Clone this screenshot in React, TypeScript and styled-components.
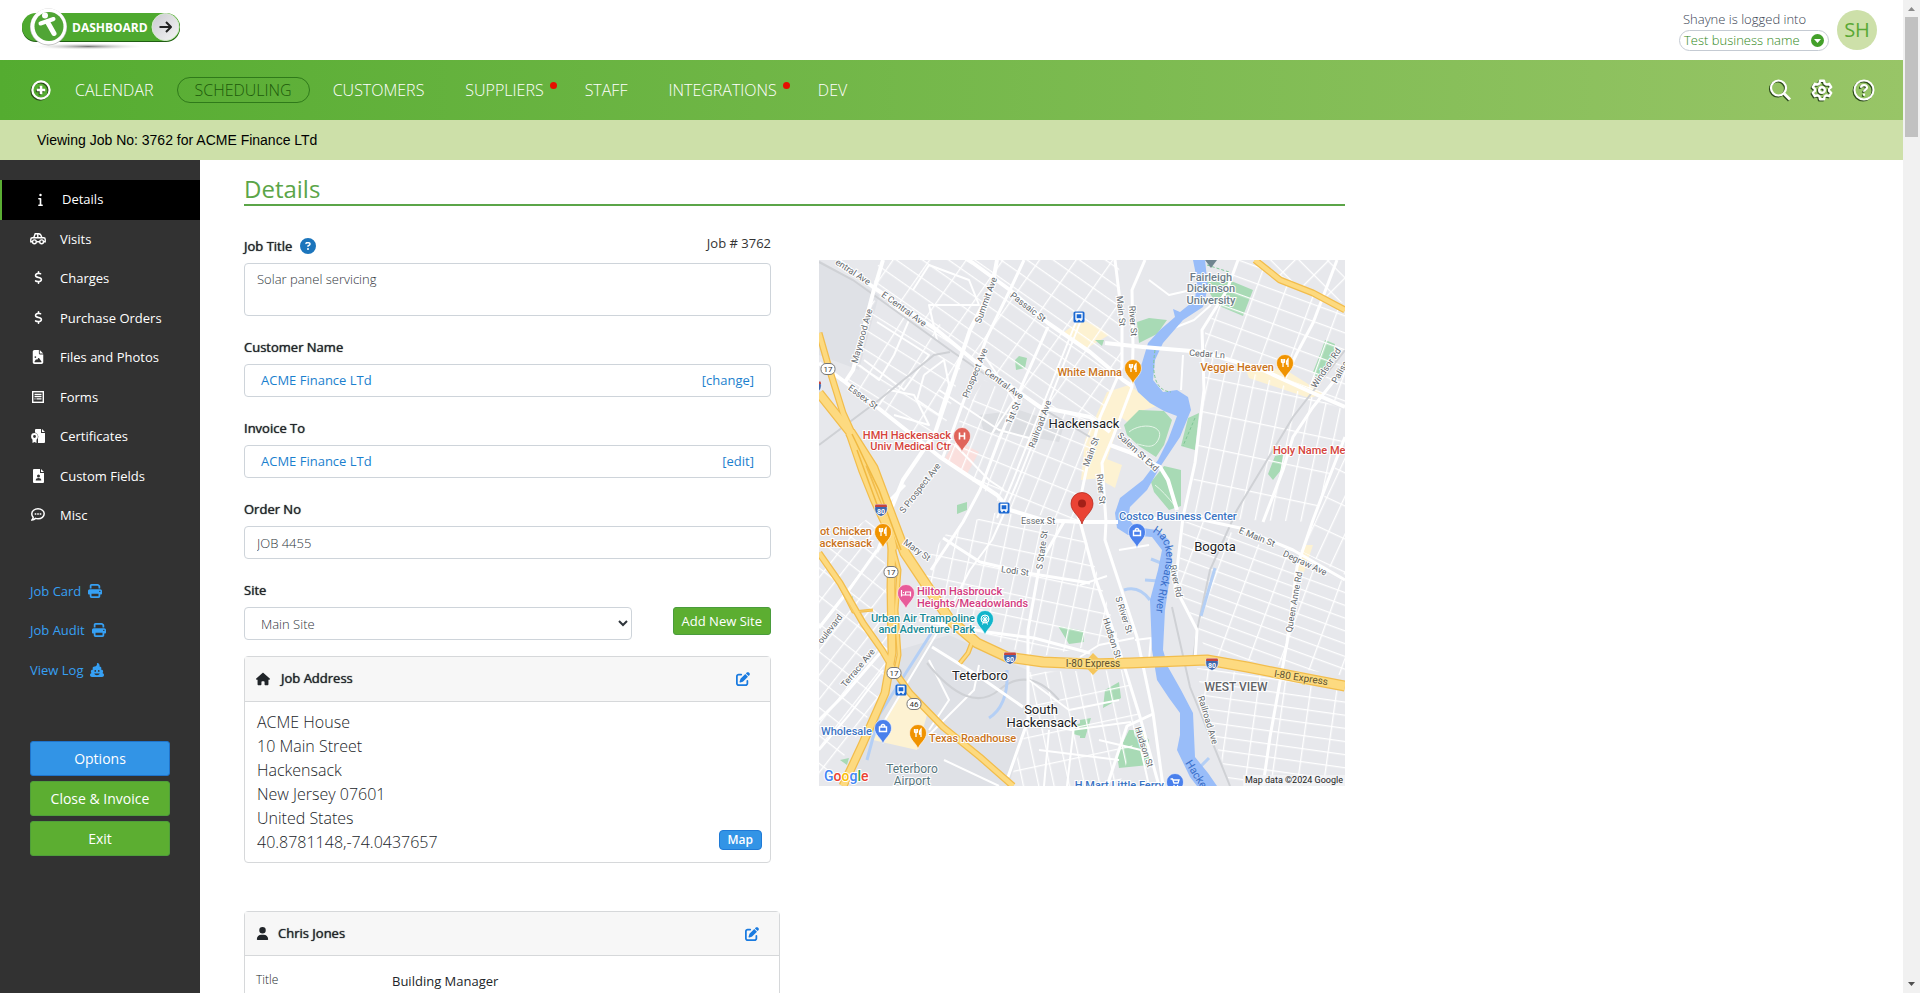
import React from "react";
import styled, { createGlobalStyle, css } from "styled-components";
import {
  FaInfo,
  FaDollarSign,
  FaFileImage,
  FaPrint,
  FaPoo,
  FaHouse,
  FaUser,
  FaPenToSquare,
  FaCircleQuestion,
} from "react-icons/fa6";

const green = "#5aad33";
const blue = "#1b7fce";

const GlobalStyle = createGlobalStyle`
  * { box-sizing: border-box; }
  body {
    margin: 0;
    background: #fff;
    color: #212529;
    font-family: "Open Sans", "Noto Sans", sans-serif;
    font-size: 13px;
    line-height: 20px;
  }
  button, input, select, textarea { font: inherit; color: inherit; margin: 0; }
  a { text-decoration: none; }
  h1, h2, ul, dl, dd, dt, p, address { margin: 0; padding: 0; font-style: normal; }
  ul { list-style: none; }
`;

const Shell = styled.div`
  display: flex;
  height: 100vh;
  overflow: hidden;
`;

const Page = styled.div`
  flex: 1;
  min-width: 0;
  display: flex;
  flex-direction: column;
`;

const ScrollTrack = styled.div`
  width: 17px;
  flex: none;
  background: #f1f1f1;
  display: flex;
  flex-direction: column;
  align-items: center;
  justify-content: space-between;
`;

const ScrollUpper = styled.div`
  display: flex;
  flex-direction: column;
`;

const ScrollThumb = styled.div`
  width: 13px;
  height: 120px;
  background: #c1c1c1;
`;

const ScrollArrow = styled.svg`
  display: block;
  width: 13px;
  height: 17px;
`;

const TopBar = styled.header`
  display: flex;
  align-items: center;
  justify-content: space-between;
  height: 60px;
  flex: none;
  padding: 0 26px 0 20px;
`;

const LogoLink = styled.a`
  display: block;
  height: 44px;
`;

const Account = styled.div`
  display: flex;
  align-items: center;
  gap: 8px;
`;

const AccountInfo = styled.div`
  display: flex;
  flex-direction: column;
`;

const AccountText = styled.span`
  padding: 0 0 1px 4px;
  font-weight: 300;
  color: #374151;
`;

const BusinessButton = styled.button`
  display: flex;
  align-items: center;
  justify-content: space-between;
  width: 150px;
  height: 21px;
  padding: 0 4px;
  border: 1px solid #c5cbd3;
  border-radius: 11px;
  background: #fff;
  color: #2f8716;
  font-weight: 300;
  line-height: 19px;
`;

const Avatar = styled.button`
  width: 40px;
  height: 40px;
  padding: 0;
  border: 0;
  border-radius: 50%;
  background: #cde0a9;
  color: #59a835;
  font-size: 20px;
`;

const MainNav = styled.nav`
  display: flex;
  align-items: center;
  height: 60px;
  flex: none;
  padding: 0 28px 0 31px;
  background: linear-gradient(90deg, #54ac30 0%, #98c567 100%);
`;

const NavList = styled.ul`
  display: flex;
  gap: 5px;
  flex: 1;
  padding-left: 6px;
`;

const NavLink = styled.a<{ $active?: boolean }>`
  position: relative;
  display: block;
  height: 26px;
  padding: 0 17px;
  border: 1px solid transparent;
  border-radius: 13px;
  color: #fff;
  font-size: 16px;
  font-weight: 300;
  line-height: 24px;
  ${(p) =>
    p.$active &&
    css`
      border-color: #2f7a1a;
      color: #1d590b;
    `}
`;

const NavDot = styled.span`
  position: absolute;
  top: 4px;
  right: 4px;
  width: 7px;
  height: 7px;
  border-radius: 50%;
  background: #e60f00;
`;

const NavActions = styled.div`
  display: flex;
  gap: 20px;
`;

const IconButton = styled.button`
  display: flex;
  padding: 0;
  border: 0;
  background: none;
  svg {
    filter: drop-shadow(-1px 1px 0 #2b4a1b);
  }
`;

const JobBar = styled.div`
  display: flex;
  align-items: center;
  height: 40px;
  flex: none;
  padding: 0 37px;
  background: #cde0a9;
  color: #000;
  font-family: "Liberation Sans", Arial, sans-serif;
  font-size: 14px;
`;

const Body = styled.div`
  flex: 1;
  min-height: 0;
  display: flex;
`;

const Sidebar = styled.aside`
  width: 200px;
  flex: none;
  padding-top: 20px;
  background: #323232;
`;

const SideItem = styled.li`
  &:nth-child(2n + 3) {
    padding-bottom: 1px;
  }
`;

const SideLink = styled.a<{ $active?: boolean }>`
  display: flex;
  align-items: center;
  gap: 14px;
  height: 39px;
  padding: 0 0 2px 30px;
  color: #fff;
  ${(p) =>
    p.$active &&
    css`
      height: 40px;
      border-left: 2px solid ${green};
      background: #000;
    `}
`;

const SideIcon = styled.span`
  display: flex;
  justify-content: center;
  width: 16px;
`;

const ReportList = styled.ul`
  padding: 36px 0 0 30px;
`;

const ReportItem = styled.li`
  &:nth-child(even) {
    padding-bottom: 1px;
  }
`;

const ReportLink = styled.a`
  display: flex;
  align-items: center;
  gap: 7px;
  height: 39px;
  padding-bottom: 2px;
  color: #36a0f4;
`;

const SideButtons = styled.div`
  display: flex;
  flex-direction: column;
  gap: 5px;
  padding: 51px 30px 0;
`;

const SideButton = styled.button<{ $blue?: boolean }>`
  height: 35px;
  border: 1px solid ${(p) => (p.$blue ? "#1f74cc" : "#4f9f3a")};
  border-radius: 3px;
  background: ${(p) => (p.$blue ? "#3294e6" : "#5cae31")};
  color: #fff;
  font-size: 14px;
`;

const Main = styled.main`
  flex: 1;
  min-width: 0;
  padding: 14px 44px 0;
`;

const Content = styled.div`
  max-width: 1101px;
`;

const Heading = styled.h1`
  border-bottom: 2px solid #5ba548;
  color: #5ba548;
  font-size: 24px;
  font-weight: 400;
  line-height: 30px;
`;

const Columns = styled.div`
  display: grid;
  grid-template-columns: minmax(0, 527fr) minmax(0, 526fr);
  gap: 48px;
  align-items: start;
`;

const Form = styled.form`
  padding-top: 30px;
`;

const Field = styled.div`
  display: flex;
  flex-direction: column;
  gap: 7px;
  margin-bottom: 21px;
`;

const LabelRow = styled.div`
  display: flex;
  align-items: center;
  gap: 8px;
  height: 20px;
`;

const strongText = css`
  font-weight: 500;
  text-shadow: 0 0 1px #212529;
`;

const Label = styled.label`
  ${strongText}
`;

const HelpButton = styled.button`
  display: flex;
  padding: 0;
  border: 0;
  background: none;
  color: #1c75bc;
`;

const JobNumber = styled.span`
  margin-left: auto;
  padding-bottom: 6px;
  font-weight: 400;
  color: #333;
`;

const controlFrame = css`
  width: 100%;
  border: 1px solid #ced4da;
  border-radius: 4px;
  background: #fff;
  color: #2f353b;
`;

const JobTitleArea = styled.textarea`
  ${controlFrame}
  display: block;
  height: 53px;
  padding: 5px 12px;
  font-weight: 300;
  resize: none;
`;

const TextInput = styled.input`
  ${controlFrame}
  height: 33px;
  padding: 0 12px;
  font-weight: 300;
`;

const LinkBox = styled.div`
  ${controlFrame}
  display: flex;
  align-items: center;
  justify-content: space-between;
  height: 33px;
  padding: 0 16px 2px 16px;
`;

const TextLink = styled.a`
  color: ${blue};
`;

const SiteRow = styled.div`
  display: flex;
  align-items: flex-start;
  gap: 41px;
`;

const SiteSelect = styled.select`
  ${controlFrame}
  flex: 1;
  height: 33px;
  padding: 0 0 0 12px;
  font-weight: 300;
`;

const AddButton = styled.button`
  height: 28px;
  padding: 0 8px;
  border: 1px solid #4a9c3c;
  border-radius: 3px;
  background: #5cae31;
  color: #fff;
`;

const Panel = styled.section<{ $wide?: boolean }>`
  margin-top: ${(p) => (p.$wide ? "48px" : "-5px")};
  margin-right: ${(p) => (p.$wide ? "-9px" : "0")};
  border: 1px solid #d6d8da;
  border-radius: 4px;
  background: #fff;
`;

const PanelHeader = styled.header<{ $compact?: boolean }>`
  display: flex;
  align-items: center;
  gap: ${(p) => (p.$compact ? "9px" : "11px")};
  height: ${(p) => (p.$compact ? "44px" : "45px")};
  padding: 0 20px 0 11px;
  border-bottom: 1px solid #d6d8da;
  background: #f7f7f7;
  color: #212529;
`;

const PanelTitle = styled.h2`
  ${strongText}
  flex: 1;
  padding-bottom: 2px;
  font-size: 13px;
`;

const EditLink = styled.a`
  display: flex;
  color: #1a7be0;
`;

const AddressBody = styled.div`
  display: flex;
  align-items: flex-end;
  justify-content: space-between;
  padding: 8px 8px 8px 12px;
`;

const Address = styled.address`
  font-size: 16px;
  font-weight: 300;
  line-height: 24px;
`;

const MapButton = styled.button`
  height: 20px;
  margin-bottom: 4px;
  padding: 0 8px;
  border: 1px solid #1f7ad6;
  border-radius: 4px;
  background: #3294e6;
  color: #fff;
  font-size: 12px;
  font-weight: 600;
  line-height: 18px;
`;

const ContactList = styled.dl`
  display: grid;
  grid-template-columns: 136px 1fr;
  min-height: 80px;
  padding: 14px 11px;
`;

const ContactTerm = styled.dt`
  font-size: 12px;
  font-weight: 300;
`;

const ContactValue = styled.dd`
  padding-top: 1px;
`;

const MapSvg = styled.svg`
  display: block;
  width: 100%;
  margin-top: 54px;
  font-family: Roboto, sans-serif;
`;

/* ---------- icons ---------- */

const DashboardLogo = () => (
  <svg width="162" height="44" viewBox="0 0 162 44" role="img" aria-label="Dashboard">
    <defs>
      <radialGradient id="logoShadow">
        <stop offset="0" stopColor="#777" />
        <stop offset="1" stopColor="#fff" stopOpacity="0" />
      </radialGradient>
      <linearGradient id="logoKnob" x1="0" y1="0" x2="1" y2="1">
        <stop offset="0" stopColor="#c9c9cf" />
        <stop offset="1" stopColor="#f6f6f6" />
      </linearGradient>
    </defs>
    <ellipse cx="68" cy="38.500" rx="60" ry="3.500" fill="url(#logoShadow)" />
    <rect x="2" y="6" width="158" height="28" rx="14" fill="#1f5e12" />
    <rect x="2" y="5" width="158" height="28" rx="14" fill="#4ea92f" />
    <ellipse cx="28.500" cy="19" rx="18.500" ry="18.500" fill="#b9b9b9" />
    <circle cx="28.500" cy="18.500" r="18" fill="#fff" />
    <circle cx="29" cy="18.500" r="14.500" fill="#50a535" />
    <circle cx="25" cy="7.500" r="3" fill="#fff" />
    <path d="M20.500 15.500 33.500 11" stroke="#fff" strokeWidth="4" strokeLinecap="round" />
    <path d="M27.500 14 34 25.500" stroke="#fff" strokeWidth="5" strokeLinecap="round" />
    <text x="52" y="24" fill="#fff" fontSize="12" fontWeight="700" fontFamily="Open Sans">
      DASHBOARD
    </text>
    <circle cx="145.500" cy="19" r="13.500" fill="url(#logoKnob)" stroke="#d9ead2" />
    <path d="M139.500 19h11M146 14l5 5-5 5" fill="none" stroke="#222" strokeWidth="2" strokeLinejoin="round" />
  </svg>
);

const PlusIcon = () => (
  <svg width="20" height="20" viewBox="0 0 20 20" fill="none" stroke="#fff" strokeWidth="2.200">
    <circle cx="10" cy="10" r="8.600" />
    <path d="M10 5.800v8.400M5.800 10h8.400" strokeWidth="2.600" />
  </svg>
);

const SearchIcon = () => (
  <svg width="22" height="22" viewBox="0 0 22 22" fill="none" stroke="#fff" strokeWidth="2.200">
    <circle cx="9.500" cy="9" r="7.500" />
    <path d="m15 14.500 6 6" strokeWidth="2.800" />
  </svg>
);

const GearIcon = () => (
  <svg width="22" height="22" viewBox="0 0 22 22" fill="none" stroke="#fff" strokeWidth="2.400" strokeLinejoin="round">
    <path d="M9 1.800h4l.6 2.700 1.900 1.100 2.700-.8 2 3.400-2.100 1.900v1.800l2.100 1.900-2 3.400-2.700-.8-1.900 1.100-.6 2.700H9l-.6-2.700-1.900-1.100-2.700.8-2-3.400 2.100-1.900v-1.800L1.800 8.200l2-3.400 2.700.8 1.900-1.100z" />
    <circle cx="11" cy="11" r="2.800" />
  </svg>
);

const HelpIcon = () => (
  <svg width="22" height="22" viewBox="0 0 22 22" fill="none" stroke="#fff" strokeWidth="2.200">
    <circle cx="11" cy="11" r="9.500" strokeWidth="2" />
    <path d="M8 8.800c0-3.600 6-3.600 6-.3 0 2.200-3 2.100-3 4.300" />
    <path d="M11 14.600v2.200" />
  </svg>
);

const ChevronBadge = () => (
  <svg width="13" height="13" viewBox="0 0 13 13">
    <circle cx="6.500" cy="6.500" r="6.500" fill="#43a02a" />
    <path d="M3 5h7L6.500 9z" fill="#fff" />
  </svg>
);

const CarIcon = () => (
  <svg width="16" height="13" viewBox="0 0 16 13" fill="none" stroke="#fff" strokeWidth="1.400">
    <path d="M2.500 9.800H.8V7.200c0-.8.600-1.500 1.500-1.500h11.400c.9 0 1.500.7 1.500 1.500v2.600h-1.700M6.500 9.800h3" />
    <path d="M3.800 5.500 5.200 1.800h3.600c1.200 0 2.500 1.800 3 3.700M7.800 2v3.500" />
    <circle cx="4.400" cy="9.800" r="1.900" />
    <circle cx="11.600" cy="9.800" r="1.900" />
  </svg>
);

const FormIcon = () => (
  <svg width="12" height="12" viewBox="0 0 12 12" fill="none" stroke="#fff" strokeWidth="1.400">
    <rect x=".7" y=".7" width="10.600" height="10.600" />
    <path d="M2.500 3.500h7M2.500 5.700h7M4.500 7.900h5M2.500 7.900h1" strokeWidth="1.300" />
  </svg>
);

const CertificateIcon = () => (
  <svg width="14" height="14" viewBox="0 0 14 14">
    <path d="M5 0h5v4h4v9a1 1 0 0 1-1 1H7V9.500a4.500 4.500 0 0 0-3-6V1a1 1 0 0 1 1-1zM11 0l3 3h-3z" fill="#fff" />
    <circle cx="3.500" cy="7.500" r="2.400" fill="none" stroke="#fff" strokeWidth="2" />
    <path d="M1.500 10h4v4l-2-1-2 1z" fill="#fff" />
  </svg>
);

const PortraitFileIcon = () => (
  <svg width="11" height="14" viewBox="0 0 11 14">
    <path d="M1 0h6v4h4v9a1 1 0 0 1-1 1H1a1 1 0 0 1-1-1V1a1 1 0 0 1 1-1zM8 0l3 3H8z" fill="#fff" />
    <circle cx="5.500" cy="7" r="1.500" fill="#323232" />
    <path d="M2.700 11.500c0-3.200 5.600-3.200 5.600 0z" fill="#323232" />
  </svg>
);

const CommentIcon = () => (
  <svg width="14" height="13" viewBox="0 0 14 13">
    <path
      d="M7 .8c3.500 0 6.200 2.200 6.200 5s-2.700 5-6.200 5c-.9 0-1.700-.1-2.400-.4-.9.800-2.200 1.500-3.700 1.600.8-.9 1.200-1.700 1.300-2.700A4.600 4.600 0 0 1 .8 5.800c0-2.800 2.700-5 6.200-5z"
      fill="none"
      stroke="#fff"
      strokeWidth="1.500"
    />
    <path d="M3.700 5.200h1.600v1.500H3.700zM6.200 5.200h1.600v1.500H6.200zM8.700 5.200h1.600v1.500H8.700z" fill="#fff" />
  </svg>
);

/* ---------- map ---------- */

const Road = ({ pts, w = 3 }: { pts: string; w?: number }) => (
  <polyline points={pts} fill="none" stroke="#fff" strokeWidth={w} strokeLinejoin="round" />
);

const highways: [string, number][] = [
  ["0,73 10,108 24,153 34,175 48,205", 6],
  ["0,133 31,172 44,210 56,240 70,270 74,290", 9],
  ["31,172 54,208 66,240 86,293 106,323 131,360 158,383 188,397 224,402 271,404 311,403 388,400 428,407 478,417 526,426", 10],
  ["66,262 73,285 72,327 73,393 66,433 44,483 24,526", 8],
  ["74,288 80,310 77,350 80,395 76,415", 4],
  ["0,293 21,323 44,363 63,390 76,412 91,433 124,467 161,497 194,526", 6],
  ["154,380 149,393 141,403", 4],
  ["21,326 34,352 54,350", 2],
  ["436,0 461,20 494,33 526,50", 6],
];

const roads: [string, number][] = [
  ["19,0 54,27 118,70 158,103 221,147 271,157 291,172", 4],
  ["64,0 54,33 34,110 26,122", 4],
  ["0,103 26,122 58,147 121,197 178,235 191,250 224,260 262,262 299,262", 4],
  ["178,0 173,27 151,70 116,173 84,220 73,247", 4],
  ["205,0 191,30 168,77 134,170 124,197", 3],
  ["130,-12 154,3 191,30 229,63 271,92 304,120 313,126", 4],
  ["229,67 204,123 181,177 161,230 144,262 112,310", 3],
  ["262,60 224,157 198,223 183,258 173,280 151,310 118,373 60,470", 2],
  ["257,62 219,157 193,223 178,258", 2],
  ["296,0 303,57 303,107 281,157 268,207 261,240 261,262", 3],
  ["326,0 313,30 314,87 313,127 294,177 283,203 287,262 286,280 318,377 334,453 344,526", 3],
  ["255,244 262,265 276,317 294,370 321,457 340,526", 3],
  ["286,83 324,87 384,92 444,110 494,133 526,147", 4],
  ["419,0 408,30 383,70 385,130 376,203 364,257 356,327 378,370 376,400", 3],
  ["518,0 494,63 478,93 466,118", 3],
  ["526,107 494,147 474,177 464,210 444,262", 3],
  ["526,177 508,223 494,260 478,307 468,383 451,477 444,526", 3],
  ["320,258 384,260 421,268 474,290 526,320", 3],
  ["291,185 310,192 341,207 349,220 358,250", 4],
  ["124,278 161,302 208,313 271,323", 3],
  ["246,260 221,303 209,370 209,460 189,517", 3],
  ["113,387 158,415 204,447", 3],
  ["100,360 168,372 215,378 271,393", 3],
  ["58,290 30,330 0,368", 3],
  ["61,393 25,435 0,460", 3],
  ["64,410 30,455 0,490", 2],
  ["74,250 58,292", 3],
  ["86,225 66,245", 3],
  ["261,325 276,320 288,316", 2],
  ["288,526 308,466 334,454", 3],
  ["261,397 280,385 315,378", 2],
  ["210,420 250,450 300,440", 2],
  ["209,460 252,470 312,462", 2],
];

const thin: string[] = [
  "70,45 90,60 75,95 60,120 40,105",
  "94,30 110,5 150,20 160,45 110,45 118,80",
  "58,62 110,95 85,130 45,100",
  "60,145 70,130 95,135 110,165 75,155",
  "105,115 125,100 130,125 120,155 98,140 105,115",
  "120,130 180,170 210,178",
  "165,95 195,140 172,175",
  "136,185 170,220 185,230",
  "330,20 350,35 372,30",
  "350,70 375,60 392,45",
  "364,95 362,130",
  "330,526 322,490 280,480",
  "110,400 130,440 110,470",
  "160,405 155,430 110,475",
  "125,500 180,526",
  "220,490 300,500",
  "230,470 225,526",
  "255,465 248,526",
  "300,290 330,285",
  "316,380 332,378 330,400",
];

const grids: { id: string; angle: number; w: number; h: number; area: string }[] = [
  { id: "gNorthWest", angle: 35, w: 30, h: 15, area: "60,0 300,0 303,110 280,160 230,150 158,103 54,27" },
  { id: "gWest", angle: 32, w: 34, h: 17, area: "30,110 54,40 150,75 128,160 110,190 30,124" },
  { id: "gDowntown", angle: 22, w: 15, h: 24, area: "221,150 285,160 265,210 262,262 190,250 120,195 165,120" },
  { id: "gSouthWest", angle: 38, w: 15, h: 22, area: "0,295 60,250 66,300 70,390 64,430 30,490 0,526" },
  { id: "gMid", angle: 12, w: 16, h: 22, area: "130,270 178,252 262,264 300,380 224,396 200,392 140,360 100,310" },
  { id: "gEast", angle: 12, w: 15, h: 34, area: "388,95 526,150 526,177 494,262 370,258 384,140" },
  { id: "gNorthEast", angle: 20, w: 28, h: 16, area: "419,0 436,0 526,52 526,145 444,108 386,90 386,70 408,30" },
  { id: "gBogota", angle: 20, w: 30, h: 12, area: "365,262 384,260 526,322 526,416 388,394 378,368 358,325" },
  { id: "gWestView", angle: 8, w: 26, h: 13, area: "378,408 428,413 526,432 526,526 412,526 385,450" },
  { id: "gFarEast", angle: 25, w: 16, h: 30, area: "496,262 526,180 526,315 480,290" },
  { id: "gLower", angle: -12, w: 15, h: 30, area: "209,412 306,410 322,460 300,526 190,526 210,460" },
  { id: "gNorthTop", angle: 45, w: 24, h: 20, area: "436,0 526,0 526,44 470,20" },
];

type Lbl = [number, number, string, number?, boolean?];
const streets: Lbl[] = [
  [34, 12, "entral Ave", 33],
  [85, 49, "E Central Ave", 36],
  [43, 76, "Maywood Ave", -74],
  [167, 40, "Summit Ave", -70],
  [209, 47, "Passaic St", 38],
  [156, 113, "Prospect Ave", -68],
  [185, 124, "Central Ave", 36],
  [44, 137, "Essex St", 37],
  [194, 153, "1st St", -66],
  [221, 164, "Railroad Ave", -70],
  [101, 228, "S Prospect Ave", -52],
  [302, 51, "Main St", 84],
  [314, 61, "River St", 86],
  [388, 94, "Cedar Ln", 4],
  [507, 108, "Windsor Rd", -56],
  [521, 112, "Palisa", -60],
  [272, 192, "Main St", -70],
  [319, 192, "Salem St Exd", 43],
  [282, 229, "River St", 84],
  [219, 261, "Essex St", 0],
  [98, 290, "Mary St", 35],
  [196, 311, "Lodi St", 8],
  [223, 290, "S State St", -82],
  [39, 408, "Terrace Ave", -50],
  [11, 369, "oulevard", -52],
  [305, 355, "S River St", 72],
  [293, 378, "Hudson St", 72],
  [357, 321, "River Rd", 78],
  [438, 277, "E Main St", 22],
  [486, 303, "Degraw Ave", 25],
  [475, 342, "Queen Anne Rd", -80],
  [389, 460, "Railroad Ave", 73],
  [325, 487, "Hudson St", 72],
  [274, 404, "I-80 Express", 0, true],
  [482, 418, "I-80 Express", 9, true],
];

const Street = ({ l: [x, y, t, r = 0, highway] }: { l: Lbl }) => (
  <text
    transform={`translate(${x} ${y}) rotate(${r})`}
    y="3"
    textAnchor="middle"
    fontSize={highway ? 10 : 9}
    fill={highway ? "#5f5230" : "#63686d"}
    stroke={highway ? "#fbdc83" : "#fff"}
    strokeWidth="2"
    paintOrder="stroke"
  >
    {t}
  </text>
);

const Place = (p: {
  x: number;
  y: number;
  c: string;
  anchor?: "start" | "middle" | "end";
  size?: number;
  weight?: number;
  children: string;
}) => (
  <text
    x={p.x}
    y={p.y}
    fill={p.c}
    fontSize={p.size ?? 11}
    fontWeight={p.weight ?? (p.size ? 400 : 500)}
    textAnchor={p.anchor ?? "middle"}
    stroke="#fff"
    strokeWidth="2"
    paintOrder="stroke"
  >
    {p.children}
  </text>
);

const glyphs: Record<string, React.ReactNode> = {
  fork: <path d="M-3.500-4v3q1.500 1.500 3 0v-3M-2-4v8M3 4v-8q-2 2-1.500 5H3" strokeWidth="1.300" />,
  hospital: <path d="M-2.500-3.500v7M2.500-3.500v7M-2.500 0h5" strokeWidth="1.600" />,
  bag: <path d="M-3.500-1h7v4.500h-7zM-1.700-1v-1.500q1.700-2 3.400 0V-1" strokeWidth="1.400" />,
  bed: <path d="M-4.500-3v6.500M-4.500 2h9v1.500M4.500 2v-3h-5v3M-3-.5h1" strokeWidth="1.200" />,
  wheel: (
    <g strokeWidth="1">
      <circle r="4" />
      <path d="M0-4v8M-4 0h8M-2.500-2.500l5 5M2.500-2.500l-5 5M-2.500 5.500 0 0l2.500 5.500" />
    </g>
  ),
  cart: <path d="M-4-3h1.500l1.500 4h4l1-3h-5.500M-1 3.500h.1M2.500 3.500h.1" strokeWidth="1.300" strokeLinecap="round" />,
};

const Pin = ({ x, y, c, g }: { x: number; y: number; c: string; g: string }) => (
  <g transform={`translate(${x} ${y})`}>
    <path d="M0 16C-1.500 10-8.500 7-8.500 0a8.500 8.500 0 0 1 17 0C8.500 7 1.500 10 0 16z" fill={c} stroke="#fff" strokeWidth=".6" />
    <g fill="none" stroke="#fff">
      {glyphs[g]}
    </g>
  </g>
);

const Transit = ({ x, y }: { x: number; y: number }) => (
  <g transform={`translate(${x} ${y})`}>
    <rect x="-5.500" y="-5.500" width="11" height="11" rx="1.500" fill="#1967d2" />
    <path d="M-3-3.500h6v5.500h-6zM-2.500 4l1.500-2M2.500 4 1 2" fill="none" stroke="#fff" strokeWidth="1.300" />
  </g>
);

const RouteSign = ({ x, y, n }: { x: number; y: number; n: string }) => (
  <g transform={`translate(${x} ${y})`}>
    <rect x="-7" y="-5.500" width="14" height="11" rx="5" fill="#fff" stroke="#777" />
    <text y="3" textAnchor="middle" fontSize="8" fill="#333">
      {n}
    </text>
  </g>
);

const Interstate = ({ x, y, n }: { x: number; y: number; n?: string }) => (
  <g transform={`translate(${x} ${y})`}>
    <path d="M-5.500-5.500h11c2 5 .5 10-5.500 12-6-2-7.500-7-5.500-12z" fill="#3f66ad" stroke="#fff" strokeWidth=".7" />
    <path d="M-5.500-5.500h11l.6 2.500H-6z" fill="#c9453c" />
    {n && (
      <text y="4" textAnchor="middle" fontSize="7" fontWeight="700" fill="#fff">
        {n}
      </text>
    )}
  </g>
);

const river =
  "M374 0 378 20 376 40 361 52 354 49 356 57 341 70 329 83 323 103 315 122 319 132 331 143 345 151 358 156 349 180 339 200 324 220 301 238 296 253 298 268 309 275 333 277 343 290 339 310 331 340 333 390 338 420 350 438 361 453 361 475 358 490 371 517 378 526H398L389 513 376 497 374 453 362 430 349 407 344 390 346 350 353 303 350 280 338 270 316 267 309 258 311 247 328 230 341 207 361 177 372 150 369 137 358 130 344 132 334 120 336 100 344 83 364 60 384 47 389 27 386 0z";

const orange = "#c9731a";
const StreetMap = () => (
  <MapSvg viewBox="0 0 526 526" role="img" aria-label="Map of Hackensack">
    <defs>
      {grids.map((g) => (
        <pattern
          key={g.id}
          id={g.id}
          width={g.w}
          height={g.h}
          patternUnits="userSpaceOnUse"
          patternTransform={`rotate(${g.angle})`}
        >
          <path d={`M0 0H${g.w}M0 0V${g.h}`} stroke="#fff" strokeWidth="2.600" />
        </pattern>
      ))}
      <path id="riverName" d="M333 272C350 280 350 300 342 322Q339 335 337 352V366" />
      <clipPath id="mapEdge">
        <rect width="526" height="526" />
      </clipPath>
    </defs>
    <g clipPath="url(#mapEdge)">
      <rect width="526" height="526" fill="#e7e8ec" />
      <path d="M0 0 60 35 40 110 0 95zM80 390 130 375 208 410 208 455 190 526H30z" fill="#dfe1e6" />
      <path d="M160 155 200 150 245 165 240 182 200 175 165 172z" fill="#dcdee2" />
      {/* commercial and hospital areas */}
      <path d="M245 72 262 60 278 66 290 75 268 88zM424 102 470 112 505 134 490 138 430 118zM288 132 310 125 338 146 325 150 312 165 302 157 282 218 262 220 266 180zM285 198 303 205 296 228 282 220zM485 285 494 285 485 312 478 310zM84 432 92 436 108 455 98 490 54 480z" fill="#fdf2d2" />
      <path d="M137 180 160 192 148 214 126 198z" fill="#fadfdd" />
      {/* parks */}
      <path
        d="M318 62 330 58 348 60 338 74 320 83zM383 20 405 18 434 30 424 56 398 45zM305 165 320 150 345 151 353 160 345 185 337 197 320 186 308 175zM369 158 380 153 376 190 362 186zM345 206 362 210 362 246 350 250 335 232 332 222zM502 92 506 80 516 84 512 105 498 118 494 112zM456 196 464 194 462 210 454 220 449 214zM276 80 285 80 283 86zM196 100 200 96 208 98 206 108 197 110zM138 245 148 242 148 250 138 254zM239 366 265 371 265 382 250 384zM310 470 322 470 330 480 330 505 300 508 298 495zM286 430 300 422 302 438 284 448zM261 460 272 458 266 478 261 478zM256 465 271 460 266 477 254 474zM27 340 34 336 32 348zM21 500 30 498 28 505z"
        fill="#a8dab5"
      />
      <path d="M310 172C322 162 345 165 340 178S325 185 318 184M336 225Q345 232 356 246" fill="none" stroke="#e5f5e8" />
      {grids.map((g) => (
        <polygon key={g.id} points={g.area} fill={`url(#${g.id})`} />
      ))}
      {thin.map((t) => (
        <Road key={t} pts={t} w={2} />
      ))}
      {/* railways */}
      <g fill="none" stroke="#cfd1d5" strokeWidth="2">
        <path d="M0 2 34 20 131 90 164 113 271 177M0 185 60 140 115 95 131 92M526 90 474 157 418 250 391 310 378 370 374 400M353 347 371 427 411 526M108 403Q150 455 180 430T240 440" />
      </g>
      {/* waterways */}
      <path
        d="M48 500 60 455 113 372M396 308 382 356M188 410Q190 445 170 458M305 330Q320 325 331 340M376 512 390 498M332 299l10 4M326 320l14 1"
        fill="none"
        stroke="#b4cff5"
        strokeWidth="3"
      />
      <path d={river} fill="#99bdf9" />
      <path d="M336 90Q330 130 352 132M388 5 410 12M376 158 364 186" fill="none" stroke="#7fc796" strokeDasharray="3 2" />
      {roads.map(([p, w]) => (
        <Road key={p} pts={p} w={w} />
      ))}
      {highways.map(([p, w]) => (
        <polyline key={`e${p}`} points={p} fill="none" stroke="#f2bd4c" strokeWidth={w + 1} strokeLinejoin="round" />
      ))}
      <path d="M264 404 274 393 285 404 274 415z" fill="#f5c65c" />
      {highways.map(([p, w]) => (
        <polyline key={p} points={p} fill="none" stroke="#fdda80" strokeWidth={w - 1.5} strokeLinejoin="round" />
      ))}
      <path d="M33 174 60 230 82 290M38 190 60 250" fill="none" stroke="#f0b941" strokeWidth="1.500" />

      {streets.map((l, i) => (
        <Street key={i} l={l} />
      ))}
      <text fontSize="11" fill="#3a6fc9">
        <textPath href="#riverName">Hackensack River</textPath>
      </text>
      <text transform="translate(366 503) rotate(58)" fontSize="11" fill="#3a6fc9">
        Hacke
      </text>

      <RouteSign x={9} y={109} n="17" />
      <RouteSign x={72} y={312} n="17" />
      <RouteSign x={75} y={413} n="17" />
      <RouteSign x={95} y={444} n="46" />
      <Interstate x={62} y={250} n="80" />
      <Interstate x={191} y={398} n="80" />
      <Interstate x={393} y={404} n="80" />
      <Interstate x={-4} y={127} />
      <Transit x={260} y={57} />
      <Transit x={185} y={248} />
      <Transit x={82} y={430} />

      <Place x={265} y={168} c="#202124" size={13}>Hackensack</Place>
      <Place x={396} y={291} c="#202124" size={13}>Bogota</Place>
      <Place x={161} y={420} c="#202124" size={13}>Teterboro</Place>
      <Place x={222} y={454} c="#202124" size={13}>South</Place>
      <Place x={223} y={467} c="#202124" size={13}>Hackensack</Place>
      <Place x={417} y={431} c="#5f6368" size={12} weight={500}>WEST VIEW</Place>
      <Place x={93} y={513} c="#56747c" size={12}>Teterboro</Place>
      <Place x={93} y={525} c="#56747c" size={12}>Airport</Place>

      <path d="M386 0h12l-6 8z" fill="#6f8590" />
      <Place x={392} y={21} c="#6c7d88">Fairleigh</Place>
      <Place x={392} y={32} c="#6c7d88">Dickinson</Place>
      <Place x={392} y={44} c="#6c7d88">University</Place>

      <Pin x={143} y={176} c="#e0645b" g="hospital" />
      <Place x={132} y={179} c="#d5433b" anchor="end">HMH Hackensack</Place>
      <Place x={132} y={190} c="#d5433b" anchor="end">Univ Medical Ctr</Place>
      <Place x={454} y={194} c="#d5433b" anchor="start">Holy Name Me</Place>

      <Pin x={314} y={108} c="#f09300" g="fork" />
      <Place x={303} y={116} c={orange} anchor="end">White Manna</Place>
      <Pin x={466} y={103} c="#f09300" g="fork" />
      <Place x={455} y={111} c={orange} anchor="end">Veggie Heaven</Place>
      <Pin x={64} y={272} c="#f09300" g="fork" />
      <Place x={53} y={275} c={orange} anchor="end">ot Chicken</Place>
      <Place x={53} y={287} c={orange} anchor="end">ackensack</Place>
      <Pin x={99} y={473} c="#f09300" g="fork" />
      <Place x={110} y={482} c={orange} anchor="start">Texas Roadhouse</Place>

      <Place x={300} y={260} c="#3b74c4" anchor="start">Costco Business Center</Place>
      <Pin x={318} y={272} c="#4a80ec" g="bag" />
      <Place x={53} y={475} c="#3b74c4" anchor="end">Wholesale</Place>
      <Pin x={64} y={468} c="#4a80ec" g="bag" />
      <Place x={345} y={529} c="#3b74c4" anchor="end">H Mart Little Ferry</Place>
      <Pin x={356} y={522} c="#4a80ec" g="cart" />

      <Pin x={87} y={333} c="#e85c9a" g="bed" />
      <Place x={98} y={335} c="#d33c80" anchor="start">Hilton Hasbrouck</Place>
      <Place x={98} y={347} c="#d33c80" anchor="start">Heights/Meadowlands</Place>
      <Pin x={166} y={359} c="#12b5cb" g="wheel" />
      <Place x={156} y={362} c="#188a96" anchor="end">Urban Air Trampoline</Place>
      <Place x={156} y={373} c="#188a96" anchor="end">and Adventure Park</Place>

      <path
        d="M263 264C261 256 252 252 252 243.500a11 11 0 0 1 22 0C274 252 265 256 263 264z"
        fill="#ea4335"
        stroke="#b72a1e"
        strokeWidth=".8"
      />
      <circle cx="263" cy="243.500" r="4" fill="#a32018" />

      <text x="5" y="521" fontSize="14" fontWeight="500" stroke="#fff" strokeWidth="2" paintOrder="stroke">
        <tspan fill="#4285f4">G</tspan>
        <tspan fill="#ea4335">o</tspan>
        <tspan fill="#fbbc04">o</tspan>
        <tspan fill="#4285f4">g</tspan>
        <tspan fill="#34a853">l</tspan>
        <tspan fill="#ea4335">e</tspan>
      </text>
      <rect x="424" y="515" width="102" height="11" fill="#f4f4f6" opacity=".8" />
      <text x="524" y="523" textAnchor="end" fontSize="9" fill="#222">
        Map data ©2024 Google
      </text>
    </g>
  </MapSvg>
);

/* ---------- page ---------- */

const navItems: { label: string; active?: boolean; dot?: boolean }[] = [
  { label: "CALENDAR" },
  { label: "SCHEDULING", active: true },
  { label: "CUSTOMERS" },
  { label: "SUPPLIERS", dot: true },
  { label: "STAFF" },
  { label: "INTEGRATIONS", dot: true },
  { label: "DEV" },
];

const sideItems: { label: string; icon: React.ReactNode }[] = [
  { label: "Details", icon: <FaInfo size={13} /> },
  { label: "Visits", icon: <CarIcon /> },
  { label: "Charges", icon: <FaDollarSign size={13} /> },
  { label: "Purchase Orders", icon: <FaDollarSign size={13} /> },
  { label: "Files and Photos", icon: <FaFileImage size={14} /> },
  { label: "Forms", icon: <FormIcon /> },
  { label: "Certificates", icon: <CertificateIcon /> },
  { label: "Custom Fields", icon: <PortraitFileIcon /> },
  { label: "Misc", icon: <CommentIcon /> },
];

const reports = [
  { label: "Job Card", icon: <FaPrint size={14} /> },
  { label: "Job Audit", icon: <FaPrint size={14} /> },
  { label: "View Log", icon: <FaPoo size={14} /> },
];

const addressLines = [
  "ACME House",
  "10 Main Street",
  "Hackensack",
  "New Jersey 07601",
  "United States",
  "40.8781148,-74.0437657",
];

export default function App() {
  return (
    <Shell>
      <GlobalStyle />
      <Page>
        <TopBar>
          <LogoLink href="#dashboard">
            <DashboardLogo />
          </LogoLink>
          <Account>
            <AccountInfo>
              <AccountText>Shayne is logged into</AccountText>
              <BusinessButton type="button">
                Test business name
                <ChevronBadge />
              </BusinessButton>
            </AccountInfo>
            <Avatar type="button">SH</Avatar>
          </Account>
        </TopBar>

        <MainNav>
          <IconButton type="button" aria-label="Add">
            <PlusIcon />
          </IconButton>
          <NavList>
            {navItems.map((n) => (
              <li key={n.label}>
                <NavLink href="#nav" $active={n.active}>
                  {n.label}
                  {n.dot && <NavDot />}
                </NavLink>
              </li>
            ))}
          </NavList>
          <NavActions>
            <IconButton type="button" aria-label="Search">
              <SearchIcon />
            </IconButton>
            <IconButton type="button" aria-label="Settings">
              <GearIcon />
            </IconButton>
            <IconButton type="button" aria-label="Help">
              <HelpIcon />
            </IconButton>
          </NavActions>
        </MainNav>

        <JobBar>Viewing Job No: 3762 for ACME Finance LTd</JobBar>

        <Body>
          <Sidebar>
            <ul>
              {sideItems.map((s, i) => (
                <SideItem key={s.label}>
                  <SideLink href="#section" $active={i === 0}>
                    <SideIcon>{s.icon}</SideIcon>
                    {s.label}
                  </SideLink>
                </SideItem>
              ))}
            </ul>
            <ReportList>
              {reports.map((r) => (
                <ReportItem key={r.label}>
                  <ReportLink href="#report">
                    {r.label}
                    {r.icon}
                  </ReportLink>
                </ReportItem>
              ))}
            </ReportList>
            <SideButtons>
              <SideButton type="button" $blue>
                Options
              </SideButton>
              <SideButton type="button">Close &amp; Invoice</SideButton>
              <SideButton type="button">Exit</SideButton>
            </SideButtons>
          </Sidebar>

          <Main>
            <Content>
              <Heading>Details</Heading>
              <Columns>
                <Form>
                  <Field>
                    <LabelRow>
                      <Label htmlFor="jobTitle">Job Title</Label>
                      <HelpButton type="button" aria-label="Job title help">
                        <FaCircleQuestion size={16} />
                      </HelpButton>
                      <JobNumber>Job # 3762</JobNumber>
                    </LabelRow>
                    <JobTitleArea id="jobTitle" defaultValue="Solar panel servicing" />
                  </Field>
                  <Field>
                    <Label as="span">Customer Name</Label>
                    <LinkBox>
                      <TextLink href="#customer">ACME Finance LTd</TextLink>
                      <TextLink href="#change">[change]</TextLink>
                    </LinkBox>
                  </Field>
                  <Field>
                    <Label as="span">Invoice To</Label>
                    <LinkBox>
                      <TextLink href="#invoice">ACME Finance LTd</TextLink>
                      <TextLink href="#edit">[edit]</TextLink>
                    </LinkBox>
                  </Field>
                  <Field>
                    <Label htmlFor="orderNo">Order No</Label>
                    <TextInput id="orderNo" defaultValue="JOB 4455" />
                  </Field>
                  <Field>
                    <Label htmlFor="site">Site</Label>
                    <SiteRow>
                      <SiteSelect id="site">
                        <option>Main Site</option>
                      </SiteSelect>
                      <AddButton type="button">Add New Site</AddButton>
                    </SiteRow>
                  </Field>

                  <Panel>
                    <PanelHeader>
                      <FaHouse size={14} />
                      <PanelTitle>Job Address</PanelTitle>
                      <EditLink href="#address" aria-label="Edit address">
                        <FaPenToSquare size={14} />
                      </EditLink>
                    </PanelHeader>
                    <AddressBody>
                      <Address>
                        {addressLines.map((a) => (
                          <div key={a}>{a}</div>
                        ))}
                      </Address>
                      <MapButton type="button">Map</MapButton>
                    </AddressBody>
                  </Panel>

                  <Panel $wide>
                    <PanelHeader $compact>
                      <FaUser size={13} />
                      <PanelTitle>Chris Jones</PanelTitle>
                      <EditLink href="#contact" aria-label="Edit contact">
                        <FaPenToSquare size={14} />
                      </EditLink>
                    </PanelHeader>
                    <ContactList>
                      <ContactTerm>Title</ContactTerm>
                      <ContactValue>Building Manager</ContactValue>
                    </ContactList>
                  </Panel>
                </Form>
                <StreetMap />
              </Columns>
            </Content>
          </Main>
        </Body>
      </Page>
      <ScrollTrack aria-hidden="true">
        <ScrollUpper>
          <ScrollArrow viewBox="0 0 13 17">
            <path d="M3 11h7L6.500 7z" fill="#8a8a8a" />
          </ScrollArrow>
          <ScrollThumb />
        </ScrollUpper>
        <ScrollArrow viewBox="0 0 13 17">
          <path d="M3 6h7l-3.500 4z" fill="#505050" />
        </ScrollArrow>
      </ScrollTrack>
    </Shell>
  );
}
